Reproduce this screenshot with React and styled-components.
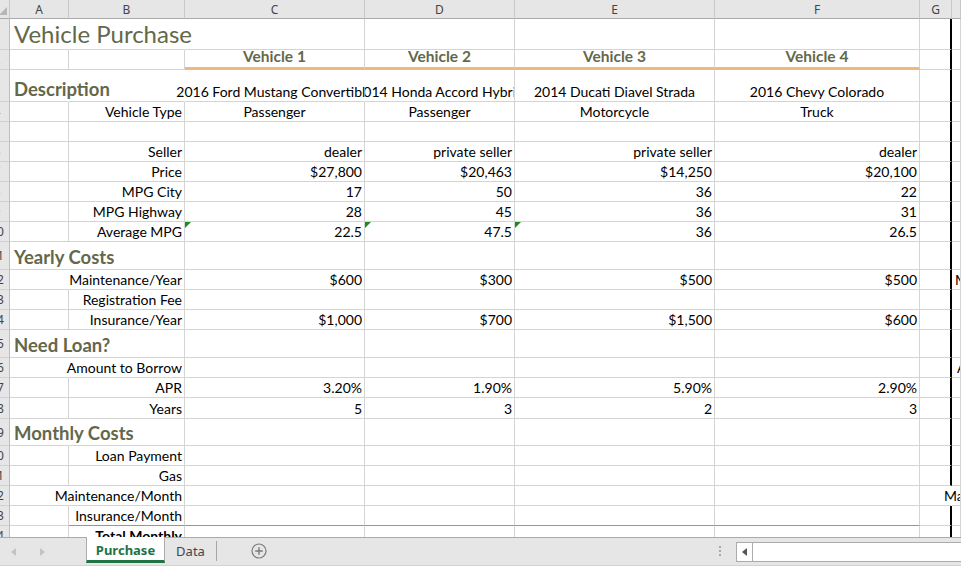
import React from 'react'
import styled, { createGlobalStyle, css } from 'styled-components'

const GlobalStyle = createGlobalStyle`
  html, body {
    margin: 0;
    padding: 0;
    background: #fff;
  }
  body {
    font-family: Lato, "Liberation Sans", sans-serif;
    overflow: hidden;
  }
`

const COLS = '10px 59px 116px 180px 150px 200px 205px 32px 1fr'
const LETTERS = ['A', 'B', 'C', 'D', 'E', 'F', 'G', '']
const GRID = '#d4d4d4'
const INK = '#64684a'
const UI_FONT = '"Noto Sans", "Open Sans", sans-serif'

const heading = (n, text, h = 28) => ({
    n,
    h,
    cells: { 0: { text, kind: 'heading', spill: 'right', right: 'none', pad: 4 } },
})

const line = (n, text, values = [], opts = {}) => {
    const cells = {
        1: { text, align: 'right', spill: opts.spill ? 'left' : null, kind: opts.kind },
    }
    if (opts.spill) cells[0] = { right: 'none' }
    values.forEach((v, i) => {
        cells[2 + i] = { text: v, align: 'right', flag: opts.flags && opts.flags.includes(i) }
    })
    if (opts.bottom) {
        for (let c = 1; c <= 5; c++) cells[c] = { ...(cells[c] || {}), bottom: opts.bottom }
    }
    return { n, h: opts.h || 20, cells: { ...cells, ...(opts.extra || {}) } }
}

const ROWS = [
    {
        n: 1,
        h: 31,
        cells: {
            0: { text: 'Vehicle Purchase', kind: 'title', spill: 'right', right: 'none', pad: 4 },
            1: { right: 'none' },
        },
    },
    {
        n: 2,
        h: 20,
        cells: {
            2: { text: 'Vehicle 1', kind: 'vehicle', align: 'center', bottom: 'orange' },
            3: { text: 'Vehicle 2', kind: 'vehicle', align: 'center', bottom: 'orange' },
            4: { text: 'Vehicle 3', kind: 'vehicle', align: 'center', bottom: 'orange' },
            5: { text: 'Vehicle 4', kind: 'vehicle', align: 'center', bottom: 'orange' },
        },
    },
    {
        n: 3,
        h: 32,
        cells: {
            0: { text: 'Description', kind: 'heading', spill: 'right', right: 'none', pad: 4 },
            1: { right: 'none' },
            2: { text: '2016 Ford Mustang Convertible', align: 'center', spill: 'left', right: 'none' },
            3: { text: '2014 Honda Accord Hybrid', align: 'center' },
            4: { text: '2014 Ducati Diavel Strada', align: 'center' },
            5: { text: '2016 Chevy Colorado', align: 'center' },
        },
    },
    {
        n: 4,
        h: 20,
        cells: {
            1: { text: 'Vehicle Type', align: 'right' },
            2: { text: 'Passenger', align: 'center' },
            3: { text: 'Passenger', align: 'center' },
            4: { text: 'Motorcycle', align: 'center' },
            5: { text: 'Truck', align: 'center' },
        },
    },
    { n: 5, h: 20, cells: {} },
    line(6, 'Seller', ['dealer', 'private seller', 'private seller', 'dealer']),
    line(7, 'Price', ['$27,800', '$20,463', '$14,250', '$20,100']),
    line(8, 'MPG City', ['17', '50', '36', '22']),
    line(9, 'MPG Highway', ['28', '45', '36', '31']),
    line(10, 'Average MPG', ['22.5', '47.5', '36', '26.5'], { flags: [0, 1, 2] }),
    heading(11, 'Yearly Costs'),
    line(12, 'Maintenance/Year', ['$600', '$300', '$500', '$500'], {
        spill: true,
        extra: { 7: { text: 'Maintenance', align: 'left', pad: 3 } },
    }),
    line(13, 'Registration Fee'),
    line(14, 'Insurance/Year', ['$1,000', '$700', '$1,500', '$600']),
    heading(15, 'Need Loan?'),
    line(16, 'Amount to Borrow', [], {
        spill: true,
        extra: { 7: { text: 'Amount', align: 'left', pad: 5 } },
    }),
    line(17, 'APR', ['3.20%', '1.90%', '5.90%', '2.90%']),
    line(18, 'Years', ['5', '3', '2', '3'], { h: 21 }),
    heading(19, 'Monthly Costs', 27),
    line(20, 'Loan Payment'),
    line(21, 'Gas'),
    line(22, 'Maintenance/Month', [], {
        spill: true,
        extra: { 6: { text: 'Maintenance', align: 'left', pad: 24, spill: 'right', right: 'none' } },
    }),
    line(23, 'Insurance/Month', [], { bottom: 'rule' }),
    line(24, 'Total Monthly', [], { kind: 'bold' }),
]

const App = () => {
    return (
        <Screen>
            <GlobalStyle />
            <Sheet>
                <HeaderRow>
                    <Corner>
                        <CornerMark />
                    </Corner>
                    {LETTERS.map((l, i) => (
                        <ColHead key={i}>{l}</ColHead>
                    ))}
                </HeaderRow>
                {ROWS.map(row => (
                    <Row key={row.n} $h={row.h}>
                        <RowHead>
                            <RowNum>{row.n}</RowNum>
                        </RowHead>
                        {LETTERS.map((l, i) => {
                            const c = row.cells[i] || {}
                            const right = c.right || (i === 6 ? 'black' : 'grid')
                            return (
                                <Cell
                                    key={i}
                                    $align={c.align || 'left'}
                                    $spill={c.spill}
                                    $right={right}
                                    $bottom={c.bottom || 'grid'}
                                    $kind={c.kind}
                                    $flag={c.flag}
                                    $pad={c.pad}
                                >
                                    {c.text && <CellText>{c.text}</CellText>}
                                </Cell>
                            )
                        })}
                    </Row>
                ))}
            </Sheet>
            <TabBar>
                <TabNav>
                    <NavArrow $dir="left" />
                    <NavArrow $dir="right" />
                </TabNav>
                <Tab $active $width={79}>Purchase</Tab>
                <Tab $width={51}>Data</Tab>
                <TabDivider />
                <AddSheet>
                    <svg width="16" height="16" viewBox="0 0 16 16">
                        <circle cx="8" cy="8" r="7" fill="none" stroke="#7a7a7a" strokeWidth="1.2" />
                        <path d="M8 4.2v7.6M4.2 8h7.6" stroke="#7a7a7a" strokeWidth="1.4" />
                    </svg>
                </AddSheet>
                <Spacer />
                <Grip>
                    <Dot />
                    <Dot />
                    <Dot />
                </Grip>
                <ScrollBar>
                    <ScrollButton>
                        <NavArrow $dir="left" $dark />
                    </ScrollButton>
                </ScrollBar>
            </TabBar>
        </Screen>
    )
}

const Screen = styled.div`
    width: 961px;
    height: 566px;
    display: flex;
    flex-direction: column;
    overflow: hidden;
    background: #fff;
`

const Sheet = styled.div`
    height: 537px;
    overflow: hidden;
    flex: none;
`

const HeaderRow = styled.div`
    display: grid;
    grid-template-columns: ${COLS};
    height: 19px;
    background: #e6e6e6;
`

const ColHead = styled.div`
    box-sizing: border-box;
    border-right: 1px solid #c8c8c8;
    border-bottom: 1px solid #ababab;
    display: flex;
    align-items: center;
    justify-content: center;
    font-family: ${UI_FONT};
    font-size: 12px;
    color: #444;
    overflow: hidden;
`

const Corner = styled(ColHead)`
    align-items: flex-end;
    justify-content: flex-end;
    padding: 0 2px 3px 0;
`

const CornerMark = styled.div`
    width: 0;
    height: 0;
    border-left: 8px solid transparent;
    border-bottom: 8px solid #b6b6b6;
`

const Row = styled.div`
    display: grid;
    grid-template-columns: ${COLS};
    height: ${p => p.$h}px;
`

const RowHead = styled.div`
    box-sizing: border-box;
    background: #e6e6e6;
    border-right: 1px solid #bdbdbd;
    border-bottom: 1px solid #d0d0d0;
    overflow: hidden;
    display: flex;
    align-items: center;
`

const RowNum = styled.span`
    flex: 0 0 26px;
    margin-left: -16px;
    text-align: center;
    font-family: ${UI_FONT};
    font-size: 12px;
    color: #444;
`

const rightBorder = {
    grid: `1px solid ${GRID}`,
    none: '1px solid transparent',
    black: '2px solid #000',
}

const bottomBorder = {
    grid: `1px solid ${GRID}`,
    orange: '3px solid #f2b77c',
    rule: '1px solid #d6893a',
}

const kinds = {
    title: css`
        font-size: 24px;
        font-weight: 400;
        color: ${INK};
        padding-bottom: 0;
    `,
    heading: css`
        font-size: 18.5px;
        font-weight: 700;
        color: ${INK};
        padding-bottom: 0;
    `,
    vehicle: css`
        font-size: 15.5px;
        font-weight: 700;
        color: ${INK};
        padding-bottom: 1px;
    `,
    bold: css`
        font-weight: 700;
    `,
}

const Cell = styled.div`
    position: relative;
    box-sizing: border-box;
    display: flex;
    align-items: flex-end;
    justify-content: ${p =>
        p.$align === 'right' ? 'flex-end' : p.$align === 'center' ? 'center' : 'flex-start'};
    padding: 0 2px 1px ${p => (p.$pad != null ? p.$pad : 2)}px;
    border-right: ${p => rightBorder[p.$right]};
    border-bottom: ${p => bottomBorder[p.$bottom]};
    font-size: 14px;
    line-height: 1.25;
    color: #000;
    white-space: nowrap;
    overflow: ${p => (p.$spill ? 'visible' : 'hidden')};
    clip-path: ${p =>
        p.$spill === 'left' ? 'inset(0 0 0 -300px)' : p.$spill === 'right' ? 'inset(0 -400px 0 0)' : 'none'};
    ${p => p.$kind && kinds[p.$kind]}

    ${p =>
        p.$flag &&
        css`
            &::before {
                content: '';
                position: absolute;
                left: 0;
                top: 0;
                border-top: 6px solid #1f8a1f;
                border-right: 6px solid transparent;
            }
        `}
`

const CellText = styled.span`
    flex: none;
`

const TabBar = styled.div`
    flex: none;
    height: 29px;
    box-sizing: border-box;
    background: #e6e6e6;
    border-top: 1px solid #ababab;
    border-bottom: 1px solid #d2d2d2;
    display: flex;
    align-items: flex-start;
    font-family: ${UI_FONT};
`

const TabNav = styled.div`
    width: 86px;
    height: 27px;
    display: flex;
    align-items: center;
    gap: 24px;
    padding-left: 11px;
    box-sizing: border-box;
`

const NavArrow = styled.span`
    width: 0;
    height: 0;
    border-top: 4px solid transparent;
    border-bottom: 4px solid transparent;
    ${p =>
        p.$dir === 'left'
            ? `border-right: 5px solid ${p.$dark ? '#555' : '#c4c4c4'};`
            : `border-left: 5px solid ${p.$dark ? '#555' : '#c4c4c4'};`}
`

const Tab = styled.div`
    flex: none;
    box-sizing: border-box;
    width: ${p => p.$width}px;
    height: ${p => (p.$active ? '26px' : '25px')};
    margin-top: ${p => (p.$active ? '-1px' : '0')};
    padding-top: ${p => (p.$active ? '2px' : '0')};
    display: flex;
    align-items: center;
    justify-content: center;
    font-size: 13px;
    font-weight: ${p => (p.$active ? 700 : 400)};
    color: ${p => (p.$active ? '#217346' : '#444')};
    background: ${p => (p.$active ? '#fff' : 'transparent')};
    border-left: ${p => (p.$active ? '1px solid #ababab' : 'none')};
    border-right: ${p => (p.$active ? '1px solid #ababab' : 'none')};
    border-bottom: ${p => (p.$active ? '3px solid #217346' : 'none')};
`

const TabDivider = styled.div`
    width: 1px;
    height: 20px;
    margin-top: 3px;
    background: #a6a6a6;
`

const AddSheet = styled.div`
    height: 26px;
    margin-left: 34px;
    display: flex;
    align-items: center;
`

const Spacer = styled.div`
    flex: 1;
`

const Grip = styled.div`
    height: 26px;
    width: 10px;
    margin-right: 11px;
    display: flex;
    flex-direction: column;
    align-items: center;
    justify-content: center;
    gap: 2px;
`

const Dot = styled.span`
    width: 2px;
    height: 2px;
    background: #a8a8a8;
`

const ScrollBar = styled.div`
    width: 240px;
    margin-right: -15px;
    height: 20px;
    margin-top: 4px;
    box-sizing: border-box;
    border: 1px solid #ababab;
    background: #fff;
    display: flex;
`

const ScrollButton = styled.div`
    width: 15px;
    border-right: 1px solid #ababab;
    display: flex;
    align-items: center;
    justify-content: center;
`

export default App
